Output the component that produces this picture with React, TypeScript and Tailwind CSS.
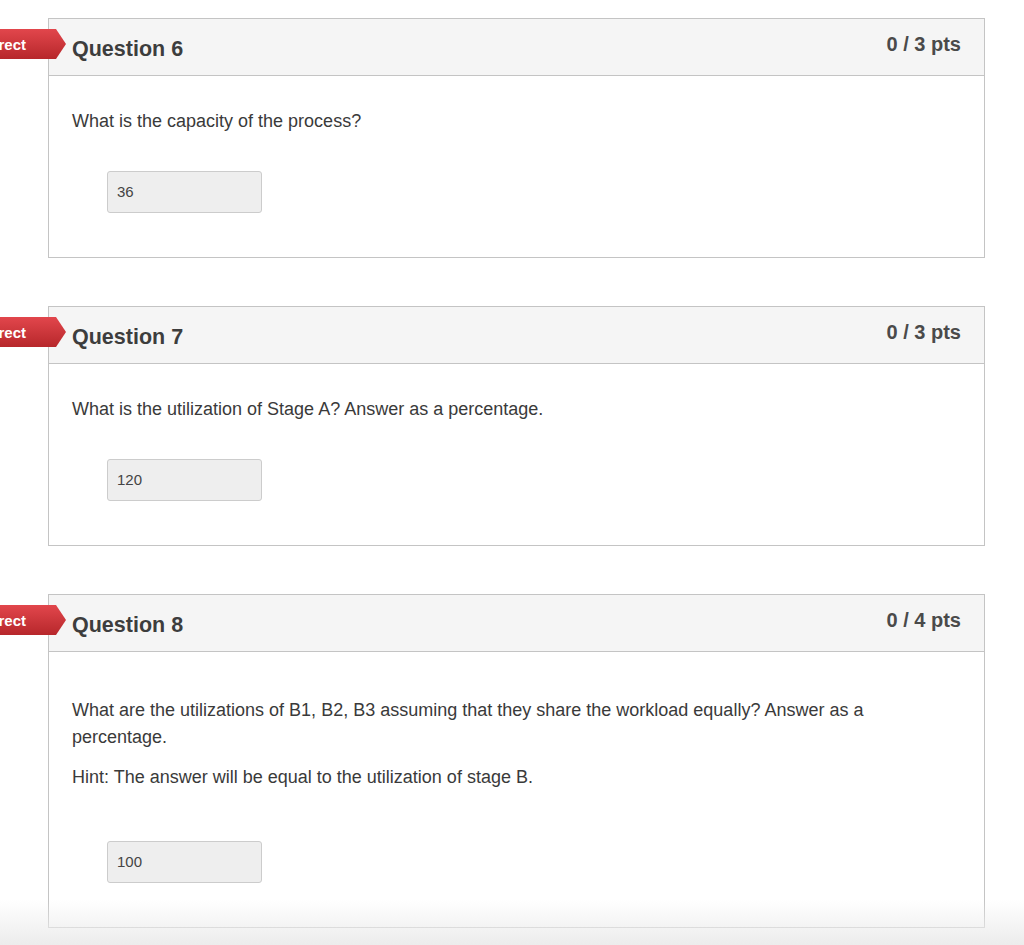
import React from 'react';

interface Question {
  title: string;
  points: string;
  answer: string;
  paragraphs: string[];
}

const questions: Question[] = [
  { title: 'Question 6', points: '0 / 3 pts', answer: '36', paragraphs: ['What is the capacity of the process?'] },
  { title: 'Question 7', points: '0 / 3 pts', answer: '120', paragraphs: ['What is the utilization of Stage A? Answer as a percentage.'] },
  {
    title: 'Question 8',
    points: '0 / 4 pts',
    answer: '100',
    paragraphs: [
      'What are the utilizations of B1, B2, B3 assuming that they share the workload equally? Answer as a percentage.',
      'Hint: The answer will be equal to the utilization of stage B.',
    ],
  },
];

function Badge() {
  return (
    <div className="absolute top-[10px] left-[-100px] h-[30px] w-[117px] bg-gradient-to-b from-[#e2464c] to-[#b7272b] [clip-path:polygon(0_0,107px_0,117px_50%,107px_100%,0_100%)] flex items-center justify-end pr-[40px]">
      <span className="text-white text-[15px] font-bold leading-none">Incorrect</span>
    </div>
  );
}

function QuestionCard({ q }: { q: Question }) {
  const long = q.paragraphs.length > 1;
  return (
    <div className="relative border border-[#c4c4c4] bg-white">
      <Badge />
      {/* Header */}
      <div className="h-[57px] bg-[#f5f5f5] border-b border-[#c4c4c4] flex justify-between pl-[23px] pr-[23px]">
        <h2 className="text-[21.5px] font-bold text-[#3d3d3d] pt-[18px] leading-[24px]">{q.title}</h2>
        <div className="text-[20px] font-bold text-[#4a4a4a] pt-[14px] leading-[22px]">{q.points}</div>
      </div>
      {/* Body */}
      <div className={`pl-[23px] pr-[100px] pb-[44px] ${long ? 'pt-[45px]' : 'pt-[32px]'}`}>
        {q.paragraphs.map((p, i) => (
          <p key={i} className={`text-[18px] leading-[27px] text-[#3a3a3a] ${i > 0 ? 'mt-[13px]' : ''}`}>
            {p}
          </p>
        ))}
        <div className={`${long ? 'mt-[50px]' : 'mt-[36px]'} ml-[35px] w-[155px] h-[42px] bg-[#eeeeee] border border-[#cccccc] rounded-[3px] flex items-center px-[9px] text-[15px] text-[#444]`}>
          {q.answer}
        </div>
      </div>
    </div>
  );
}

export default function App() {
  return (
    <div className="relative h-[945px] w-full overflow-hidden bg-white font-['Liberation_Sans',Arial,sans-serif]">
      <div className="ml-[48px] w-[937px] pt-[18px] flex flex-col gap-[48px]">
        {questions.map(q => (
          <QuestionCard key={q.title} q={q} />
        ))}
      </div>
      {/* bottom fade */}
      <div className="pointer-events-none absolute bottom-0 left-0 right-0 h-[45px] bg-gradient-to-b from-white/0 to-[#ececec]" />
    </div>
  );
}
